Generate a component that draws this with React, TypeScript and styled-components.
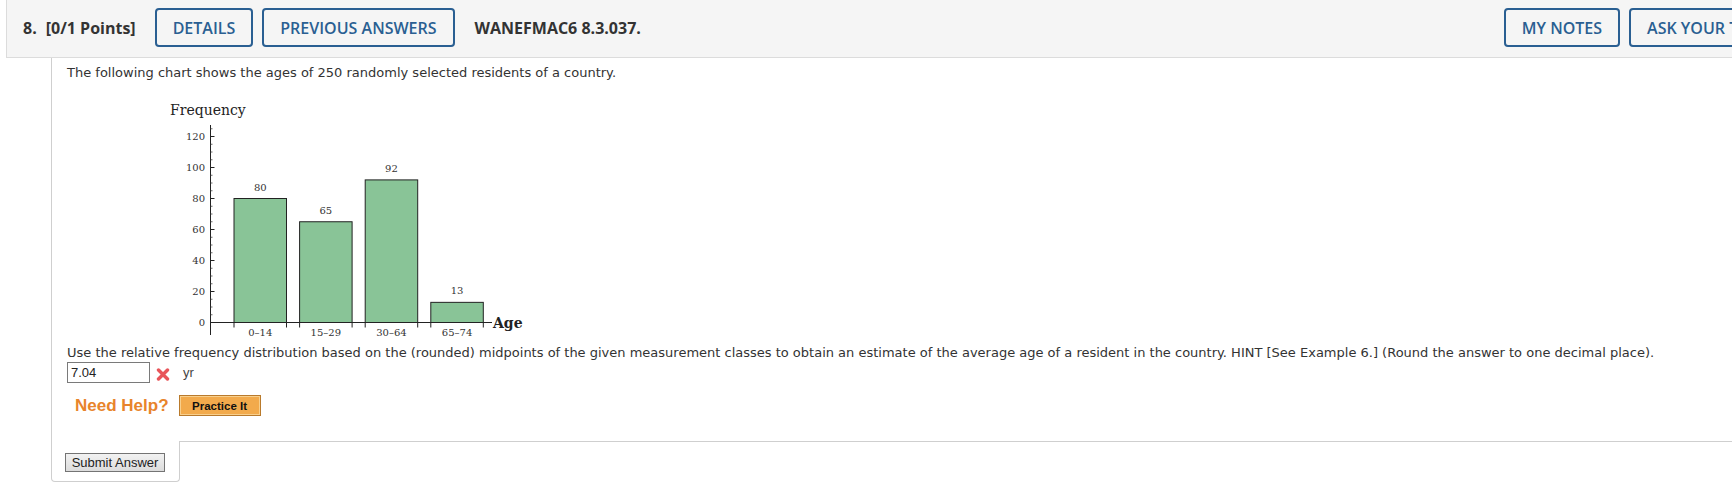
import React from "react";
import styled, { createGlobalStyle } from "styled-components";

const Global = createGlobalStyle`
  html, body { margin: 0; padding: 0; overflow: hidden; background: #fff; }
  body { font-family: "DejaVu Sans", Verdana, sans-serif; color: #333; }
`;

const Page = styled.div`
  width: 1833px;
`;

const Header = styled.header`
  display: flex;
  align-items: center;
  margin-left: 6px;
  padding: 8px 16px 10px 16px;
  background: #f5f5f5;
  border-left: 1px solid #dcdcdc;
  border-bottom: 1px solid #dcdcdc;
  font-family: "Open Sans", sans-serif;
  font-size: 16px;
  font-weight: 700;
  color: #333;
  white-space: nowrap;
`;

const QNum = styled.span`
  margin-right: 9px;
`;

const Points = styled.span`
  margin-right: 19px;
`;

const OutlineButton = styled.button<{ $gap?: number }>`
  height: 39px;
  padding: 0 16px;
  margin-left: ${(p) => p.$gap ?? 0}px;
  border: 2px solid #2a5f92;
  border-radius: 4px;
  background: transparent;
  color: #2a5f92;
  font-family: "Open Sans", sans-serif;
  font-size: 16px;
  font-weight: 600;
  flex-shrink: 0;
`;

const Code = styled.span`
  margin-left: 20px;
`;

const RightGroup = styled.div`
  margin-left: auto;
  display: flex;
  gap: 9px;
`;

const QuestionBody = styled.section`
  margin-left: 51px;
  border-left: 1px solid #cfcfcf;
  padding: 6px 15px 25px 15px;
  font-size: 13px;
  line-height: 18px;
`;

const Para = styled.p`
  margin: 0;
  color: #333;
`;

const ChartSvg = styled.svg`
  display: block;
  margin-left: 73px;
`;

const AnswerRow = styled.div`
  display: flex;
  align-items: center;
  height: 21px;
`;

const AnswerInput = styled.input`
  box-sizing: border-box;
  width: 83px;
  height: 21px;
  margin: 0;
  padding: 0 3px;
  border: 1px solid #7a7a7a;
  font-family: "Liberation Sans", Arial, sans-serif;
  font-size: 13px;
  color: #222;
`;

const WrongMark = styled.svg`
  margin-left: 6px;
  margin-top: 3px;
`;

const Unit = styled.span`
  margin-left: 13px;
  font-family: "Liberation Sans", Arial, sans-serif;
  font-size: 13px;
  color: #444;
`;

const HelpRow = styled.div`
  display: flex;
  align-items: center;
  height: 21px;
  margin-top: 12px;
  padding-left: 8px;
`;

const HelpLabel = styled.span`
  font-family: "Liberation Sans", Arial, sans-serif;
  font-size: 17px;
  font-weight: 700;
  color: #e8842b;
`;

const PracticeButton = styled.button`
  box-sizing: border-box;
  margin-left: 10px;
  width: 82px;
  height: 21px;
  padding: 0;
  border: 1px solid #b97a2c;
  box-shadow: inset 0 0 0 1px #f8cf8c;
  background: #f2aa4c;
  font-family: "Liberation Sans", Arial, sans-serif;
  font-size: 11.5px;
  font-weight: 700;
  color: #111;
`;

const Footer = styled.div`
  display: flex;
  margin-left: 51px;
`;

const SubmitTab = styled.div`
  padding: 12px 14px 9px 13px;
  border: 1px solid #cfcfcf;
  border-top: none;
  border-radius: 0 0 4px 4px;
`;

const Filler = styled.div`
  flex: 1;
  border-top: 1px solid #cfcfcf;
`;

const SubmitButton = styled.button`
  display: block;
  box-sizing: border-box;
  width: 100px;
  height: 19px;
  padding: 0;
  border: 1px solid #747474;
  background: linear-gradient(#f2f2f2, #dcdcdc);
  font-family: "Liberation Sans", Arial, sans-serif;
  font-size: 13px;
  color: #222;
`;

const bars = [
  { label: "0–14", value: 80 },
  { label: "15–29", value: 65 },
  { label: "30–64", value: 92 },
  { label: "65–74", value: 13 },
];

const Y0 = 322.5;
const SCALE = 1.55;
const AXIS_X = 210.5;
const yOf = (v: number) => Y0 - v * SCALE;

function Chart() {
  const majors = [0, 20, 40, 60, 80, 100, 120];
  const minors: number[] = [];
  for (let v = 0; v <= 125; v += 5) if (v % 20 !== 0) minors.push(v);
  const serif = "'DejaVu Serif', serif";
  return (
    <ChartSvg width={400} height={262} viewBox="140 82 400 262">
      <text x={170} y={115} fontFamily={serif} fontSize={14} fill="#222">
        Frequency
      </text>
      {bars.map((b, i) => {
        const x = 234 + i * 65.6;
        const top = yOf(b.value);
        return (
          <g key={b.label}>
            <rect x={x} y={top} width={52.5} height={Y0 - top} fill="#89c497" stroke="#222" strokeWidth={1} />
            <text x={x + 26.25} y={top - 8} textAnchor="middle" fontFamily={serif} fontSize={10} fill="#333">
              {b.value}
            </text>
            <text x={x + 26.25} y={336} textAnchor="middle" fontFamily={serif} fontSize={10} fill="#333">
              {b.label}
            </text>
            <line x1={x} y1={Y0} x2={x} y2={Y0 + 5} stroke="#222" />
            <line x1={x + 52.5} y1={Y0} x2={x + 52.5} y2={Y0 + 5} stroke="#222" />
          </g>
        );
      })}
      <line x1={AXIS_X} y1={125} x2={AXIS_X} y2={335} stroke="#222" />
      <line x1={AXIS_X} y1={Y0} x2={492} y2={Y0} stroke="#222" />
      {majors.map((v) => (
        <g key={v}>
          <line x1={AXIS_X} y1={yOf(v)} x2={AXIS_X + 4} y2={yOf(v)} stroke="#222" />
          <text x={205} y={yOf(v) + 3.5} textAnchor="end" fontFamily={serif} fontSize={10} fill="#333">
            {v}
          </text>
        </g>
      ))}
      {minors.map((v) => (
        <line key={v} x1={AXIS_X} y1={yOf(v)} x2={AXIS_X + 2} y2={yOf(v)} stroke="#444" strokeWidth={0.8} />
      ))}
      <text x={493} y={328} fontFamily={serif} fontSize={14} fontWeight={700} fill="#222">
        Age
      </text>
    </ChartSvg>
  );
}

export default function App() {
  return (
    <Page>
      <Global />
      <Header>
        <QNum>8.</QNum>
        <Points>[0/1 Points]</Points>
        <OutlineButton>DETAILS</OutlineButton>
        <OutlineButton $gap={9}>PREVIOUS ANSWERS</OutlineButton>
        <Code>WANEFMAC6 8.3.037.</Code>
        <RightGroup>
          <OutlineButton>MY NOTES</OutlineButton>
          <OutlineButton>ASK YOUR TEACHER</OutlineButton>
        </RightGroup>
      </Header>
      <QuestionBody>
        <Para>The following chart shows the ages of 250 randomly selected residents of a country.</Para>
        <Chart />
        <Para>
          Use the relative frequency distribution based on the (rounded) midpoints of the given measurement classes to
          obtain an estimate of the average age of a resident in the country. HINT [See Example 6.] (Round the answer to
          one decimal place).
        </Para>
        <AnswerRow>
          <AnswerInput defaultValue="7.04" />
          <WrongMark width={14} height={13} viewBox="0 0 14 13">
            <path d="M2.5 2 L11.5 11 M11.5 2 L2.5 11" stroke="#e8555a" strokeWidth={3.4} strokeLinecap="round" />
          </WrongMark>
          <Unit>yr</Unit>
        </AnswerRow>
        <HelpRow>
          <HelpLabel>Need Help?</HelpLabel>
          <PracticeButton>Practice It</PracticeButton>
        </HelpRow>
      </QuestionBody>
      <Footer>
        <SubmitTab>
          <SubmitButton>Submit Answer</SubmitButton>
        </SubmitTab>
        <Filler />
      </Footer>
    </Page>
  );
}
